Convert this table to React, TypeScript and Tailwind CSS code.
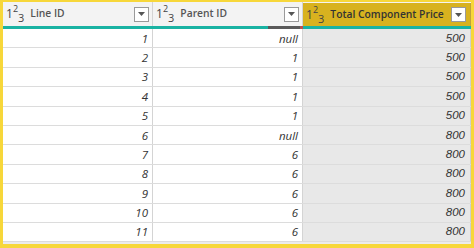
import React from "react";

type Row = { line: number; parent: string; price: number };

const rows: Row[] = [
  { line: 1, parent: "null", price: 500 },
  { line: 2, parent: "1", price: 500 },
  { line: 3, parent: "1", price: 500 },
  { line: 4, parent: "1", price: 500 },
  { line: 5, parent: "1", price: 500 },
  { line: 6, parent: "null", price: 800 },
  { line: 7, parent: "6", price: 800 },
  { line: 8, parent: "6", price: 800 },
  { line: 9, parent: "6", price: 800 },
  { line: 10, parent: "6", price: 800 },
  { line: 11, parent: "6", price: 800 },
];

// icone "1²3" du type entier
function TypeIcon() {
  return (
    <span className="flex items-start text-[12px] leading-none text-[#444] mr-[6px] shrink-0">
      <span className="mt-[3px]">1</span>
      <span className="text-[9px] -mt-[1px]">2</span>
      <span className="text-[11px] mt-[7px]">3</span>
    </span>
  );
}

function Caret() {
  return (
    <div className="ml-auto shrink-0 h-[15px] w-[15px] border border-[#9a9a9a] bg-white grid place-items-center">
      <svg width="7" height="4" viewBox="0 0 7 4">
        <path d="M0 0h7L3.5 4z" fill="#555" />
      </svg>
    </div>
  );
}

export default function App() {
  return (
    <div
      className="w-[474px] h-[248px] bg-[#f7d73a] pl-[3px] pr-[3px] pt-[2px] pb-[4px] overflow-hidden"
      style={{ fontFamily: '"Open Sans", "Noto Sans", sans-serif' }}
    >
      <div className="h-full bg-white flex flex-col">
        {/* header */}
        <div className="flex h-[24px] bg-[#f3f3f3] shrink-0 whitespace-nowrap">
          <div className="w-[150px] flex items-center pl-[3px] pr-[3px] border-r border-[#d4d4d4]">
            <TypeIcon />
            <span className="text-[10.3px] font-semibold text-[#555]">Line ID</span>
            <Caret />
          </div>
          <div className="w-[150px] flex items-center pl-[3px] pr-[3px] border-r border-[#d4d4d4]">
            <TypeIcon />
            <span className="text-[10.3px] font-semibold text-[#555]">Parent ID</span>
            <Caret />
          </div>
          <div className="flex-1 flex items-center pl-[3px] pr-[4px] bg-[#d8b21f] mt-[1px] border-r border-[#bfa13a]">
            <TypeIcon />
            <span className="text-[10.3px] font-semibold text-[#333]">Total Component Price</span>
            <Caret />
          </div>
        </div>
        {/* quality bars */}
        <div className="flex h-[3px] shrink-0">
          <div className="w-[150px] bg-[#1ab3a3]" />
          <div className="w-[150px] flex">
            <div className="flex-1 bg-[#1ab3a3]" />
            <div className="w-[32px] bg-[#5a5a5a]" />
            <div className="w-[3px] bg-[#c0504d]" />
          </div>
          <div className="flex-1 bg-[#1ab3a3]" />
        </div>
        {/* body */}
        <div className="flex-1 flex flex-col">
          {rows.map((r) => (
            <div key={r.line} className="flex h-[19.4px] border-b border-[#dcdcdc] text-[11.5px] italic text-[#333]">
              <div className="w-[150px] flex items-center justify-end pr-[4px] border-r border-[#d4d4d4]">
                {r.line}
              </div>
              <div className="w-[150px] flex items-center justify-end pr-[4px] border-r border-[#d4d4d4]">
                {r.parent}
              </div>
              <div
                className="flex-1 flex items-center justify-end pr-[5px] bg-[#e8e8e8] border-r border-[#cfcfcf]"
                style={{ fontFamily: '"Liberation Sans", Arial, sans-serif' }}
              >
                {r.price}
              </div>
            </div>
          ))}
          <div className="flex-1 bg-[#ececec]" />
        </div>
      </div>
    </div>
  );
}
